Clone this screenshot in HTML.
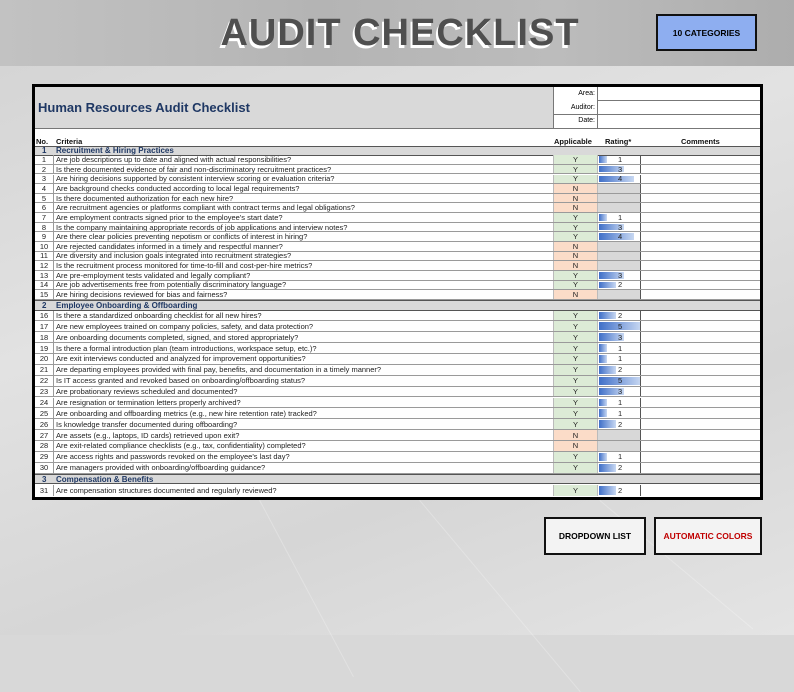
<!DOCTYPE html>
<html><head><meta charset="utf-8"><style>
*{margin:0;padding:0;box-sizing:border-box}
html{background:#d8d8d8}
body{width:794px;height:635px;overflow:hidden;position:relative;font-family:"Liberation Sans",Arial,sans-serif;background:linear-gradient(160deg,#d2d2d2 0%,#e2e2e2 40%,#d6d6d6 70%,#e4e4e4 100%)}
.band{position:absolute;left:0;top:0;width:794px;height:66px;background:linear-gradient(90deg,#c2c2c2,#b4b4b4 40%,#bcbcbc 70%,#adadad)}
.ttl{position:absolute;left:200px;top:12px;width:400px;text-align:center;font-weight:bold;font-size:38px;color:#4f4f4f;letter-spacing:1px;text-shadow:-2px 3px 0 #fff}
.btn{position:absolute;border:2px solid #111;font-weight:bold;font-size:8.5px;display:flex;align-items:center;justify-content:center}
.ln{position:absolute;background:rgba(255,255,255,.25);height:1px;transform-origin:0 0}
.tbl{position:absolute;left:32px;top:84px;width:731px;height:416px;border:3px solid #000;background:#fff}
.r{position:absolute;left:0;width:725px;font-size:7.5px;color:#222;border-bottom:1px solid #9a9a9a}
.r span{position:absolute;top:0;bottom:0;display:flex;align-items:center;white-space:nowrap;overflow:hidden}
.n{left:0;width:18px;justify-content:center}
.c{left:18px;width:500px;padding-left:2px;border-left:1px solid #9a9a9a}
.a{left:518px;width:44px;justify-content:center;border-left:1px solid #bbb}
.y{background:#dcebd6}.no{background:#fbdcc8}
.g{left:562px;width:44px;border-left:1px solid #bbb;border-right:1px solid #555}
.gg{background:#d8d8d8}
.g i{position:absolute;left:1px;top:1px;bottom:1px;background:linear-gradient(90deg,#3f6fc8,#c8d8f2);display:block}
.g b{position:absolute;left:20px;font-weight:normal}
.cat{position:absolute;left:0;width:725px;background:#d9d9d9;font-weight:bold;font-size:8px;color:#1f3864;border-bottom:1px solid #555;border-top:1px solid #555}
.cat span{position:absolute;top:0;bottom:0;display:flex;align-items:center}
</style></head><body>
<div class="band"></div>
<div class="ln" style="left:260px;top:500px;width:200px;transform:rotate(62deg)"></div>
<div class="ln" style="left:420px;top:500px;width:250px;transform:rotate(50deg)"></div>
<div class="ln" style="left:600px;top:500px;width:200px;transform:rotate(40deg)"></div>
<div class="ttl">AUDIT CHECKLIST</div>
<div class="btn" style="left:656px;top:14px;width:101px;height:37px;background:#8eaef0">10 CATEGORIES</div>
<div class="btn" style="left:544px;top:517px;width:102px;height:38px;background:#f3f3f3">DROPDOWN LIST</div>
<div class="btn" style="left:654px;top:517px;width:108px;height:38px;background:#f3f3f3;color:#c00000">AUTOMATIC COLORS</div>

<div class="tbl">
<div style="position:absolute;left:0;top:0;width:518px;height:42px;background:#d9d9d9;border-bottom:1px solid #777"></div>
<div style="position:absolute;left:3px;top:13px;font-weight:bold;font-size:13px;color:#1f3864">Human Resources Audit Checklist</div>
<div style="position:absolute;left:518px;top:0;width:44px;height:42px;border-left:1px solid #777;border-bottom:1px solid #777;font-size:7px;text-align:right;padding-right:2px;line-height:13.5px">Area:<br>Auditor:<br>Date:</div>
<div style="position:absolute;left:562px;top:0;width:163px;height:42px;border-left:1px solid #777;border-bottom:1px solid #777"></div>
<div style="position:absolute;left:562px;top:13px;width:163px;border-top:1px solid #777"></div>
<div style="position:absolute;left:518px;top:27px;width:207px;border-top:1px solid #777"></div>
<div style="position:absolute;left:0;top:50px;width:725px;font-size:7.5px;font-weight:bold;color:#111">
<span style="position:absolute;left:1px">No.</span><span style="position:absolute;left:21px">Criteria</span><span style="position:absolute;left:519px">Applicable</span><span style="position:absolute;left:570px">Rating*</span><span style="position:absolute;left:646px">Comments</span></div>

<div class="cat" style="top:59px;height:9.5px"><span style="left:7px">1</span><span style="left:21px">Recruitment &amp; Hiring Practices</span></div>
<div class="r" style="top:68.2px;height:9.7px"><span class="n">1</span><span class="c">Are job descriptions up to date and aligned with actual responsibilities?</span><span class="a y">Y</span><span class="g"><i style="width:8px"></i><b>1</b></span></div>
<div class="r" style="top:77.8px;height:9.7px"><span class="n">2</span><span class="c">Is there documented evidence of fair and non-discriminatory recruitment practices?</span><span class="a y">Y</span><span class="g"><i style="width:25px"></i><b>3</b></span></div>
<div class="r" style="top:87.5px;height:9.7px"><span class="n">3</span><span class="c">Are hiring decisions supported by consistent interview scoring or evaluation criteria?</span><span class="a y">Y</span><span class="g"><i style="width:35px"></i><b>4</b></span></div>
<div class="r" style="top:97.1px;height:9.7px"><span class="n">4</span><span class="c">Are background checks conducted according to local legal requirements?</span><span class="a no">N</span><span class="g gg"></span></div>
<div class="r" style="top:106.7px;height:9.7px"><span class="n">5</span><span class="c">Is there documented authorization for each new hire?</span><span class="a no">N</span><span class="g gg"></span></div>
<div class="r" style="top:116.4px;height:9.7px"><span class="n">6</span><span class="c">Are recruitment agencies or platforms compliant with contract terms and legal obligations?</span><span class="a no">N</span><span class="g gg"></span></div>
<div class="r" style="top:126px;height:9.7px"><span class="n">7</span><span class="c">Are employment contracts signed prior to the employee's start date?</span><span class="a y">Y</span><span class="g"><i style="width:8px"></i><b>1</b></span></div>
<div class="r" style="top:135.7px;height:9.7px"><span class="n">8</span><span class="c">Is the company maintaining appropriate records of job applications and interview notes?</span><span class="a y">Y</span><span class="g"><i style="width:25px"></i><b>3</b></span></div>
<div class="r" style="top:145.3px;height:9.7px"><span class="n">9</span><span class="c">Are there clear policies preventing nepotism or conflicts of interest in hiring?</span><span class="a y">Y</span><span class="g"><i style="width:35px"></i><b>4</b></span></div>
<div class="r" style="top:154.9px;height:9.7px"><span class="n">10</span><span class="c">Are rejected candidates informed in a timely and respectful manner?</span><span class="a no">N</span><span class="g gg"></span></div>
<div class="r" style="top:164.6px;height:9.7px"><span class="n">11</span><span class="c">Are diversity and inclusion goals integrated into recruitment strategies?</span><span class="a no">N</span><span class="g gg"></span></div>
<div class="r" style="top:174.2px;height:9.7px"><span class="n">12</span><span class="c">Is the recruitment process monitored for time-to-fill and cost-per-hire metrics?</span><span class="a no">N</span><span class="g gg"></span></div>
<div class="r" style="top:183.9px;height:9.7px"><span class="n">13</span><span class="c">Are pre-employment tests validated and legally compliant?</span><span class="a y">Y</span><span class="g"><i style="width:25px"></i><b>3</b></span></div>
<div class="r" style="top:193.5px;height:9.7px"><span class="n">14</span><span class="c">Are job advertisements free from potentially discriminatory language?</span><span class="a y">Y</span><span class="g"><i style="width:17px"></i><b>2</b></span></div>
<div class="r" style="top:203.1px;height:9.7px"><span class="n">15</span><span class="c">Are hiring decisions reviewed for bias and fairness?</span><span class="a no">N</span><span class="g gg"></span></div>

<div class="cat" style="top:212.8px;height:10.8px"><span style="left:7px">2</span><span style="left:21px">Employee Onboarding &amp; Offboarding</span></div>
<div class="r" style="top:223.6px;height:10.9px"><span class="n">16</span><span class="c">Is there a standardized onboarding checklist for all new hires?</span><span class="a y">Y</span><span class="g"><i style="width:17px"></i><b>2</b></span></div>
<div class="r" style="top:234.4px;height:10.9px"><span class="n">17</span><span class="c">Are new employees trained on company policies, safety, and data protection?</span><span class="a y">Y</span><span class="g"><i style="width:42px"></i><b>5</b></span></div>
<div class="r" style="top:245.3px;height:10.9px"><span class="n">18</span><span class="c">Are onboarding documents completed, signed, and stored appropriately?</span><span class="a y">Y</span><span class="g"><i style="width:25px"></i><b>3</b></span></div>
<div class="r" style="top:256.2px;height:10.9px"><span class="n">19</span><span class="c">Is there a formal introduction plan (team introductions, workspace setup, etc.)?</span><span class="a y">Y</span><span class="g"><i style="width:8px"></i><b>1</b></span></div>
<div class="r" style="top:267px;height:10.9px"><span class="n">20</span><span class="c">Are exit interviews conducted and analyzed for improvement opportunities?</span><span class="a y">Y</span><span class="g"><i style="width:8px"></i><b>1</b></span></div>
<div class="r" style="top:277.9px;height:10.9px"><span class="n">21</span><span class="c">Are departing employees provided with final pay, benefits, and documentation in a timely manner?</span><span class="a y">Y</span><span class="g"><i style="width:17px"></i><b>2</b></span></div>
<div class="r" style="top:288.8px;height:10.9px"><span class="n">22</span><span class="c">Is IT access granted and revoked based on onboarding/offboarding status?</span><span class="a y">Y</span><span class="g"><i style="width:42px"></i><b>5</b></span></div>
<div class="r" style="top:299.6px;height:10.9px"><span class="n">23</span><span class="c">Are probationary reviews scheduled and documented?</span><span class="a y">Y</span><span class="g"><i style="width:25px"></i><b>3</b></span></div>
<div class="r" style="top:310.5px;height:10.9px"><span class="n">24</span><span class="c">Are resignation or termination letters properly archived?</span><span class="a y">Y</span><span class="g"><i style="width:8px"></i><b>1</b></span></div>
<div class="r" style="top:321.4px;height:10.9px"><span class="n">25</span><span class="c">Are onboarding and offboarding metrics (e.g., new hire retention rate) tracked?</span><span class="a y">Y</span><span class="g"><i style="width:8px"></i><b>1</b></span></div>
<div class="r" style="top:332.2px;height:10.9px"><span class="n">26</span><span class="c">Is knowledge transfer documented during offboarding?</span><span class="a y">Y</span><span class="g"><i style="width:17px"></i><b>2</b></span></div>
<div class="r" style="top:343.1px;height:10.9px"><span class="n">27</span><span class="c">Are assets (e.g., laptops, ID cards) retrieved upon exit?</span><span class="a no">N</span><span class="g gg"></span></div>
<div class="r" style="top:354px;height:10.9px"><span class="n">28</span><span class="c">Are exit-related compliance checklists (e.g., tax, confidentiality) completed?</span><span class="a no">N</span><span class="g gg"></span></div>
<div class="r" style="top:364.8px;height:10.9px"><span class="n">29</span><span class="c">Are access rights and passwords revoked on the employee's last day?</span><span class="a y">Y</span><span class="g"><i style="width:8px"></i><b>1</b></span></div>
<div class="r" style="top:375.7px;height:10.9px"><span class="n">30</span><span class="c">Are managers provided with onboarding/offboarding guidance?</span><span class="a y">Y</span><span class="g"><i style="width:17px"></i><b>2</b></span></div>
<div class="cat" style="top:386.6px;height:10.9px"><span style="left:7px">3</span><span style="left:21px">Compensation &amp; Benefits</span></div>
<div class="r" style="top:397.5px;height:11px;border-bottom:none"><span class="n">31</span><span class="c">Are compensation structures documented and regularly reviewed?</span><span class="a y">Y</span><span class="g"><i style="width:17px"></i><b>2</b></span></div>
</div>
</body></html>
